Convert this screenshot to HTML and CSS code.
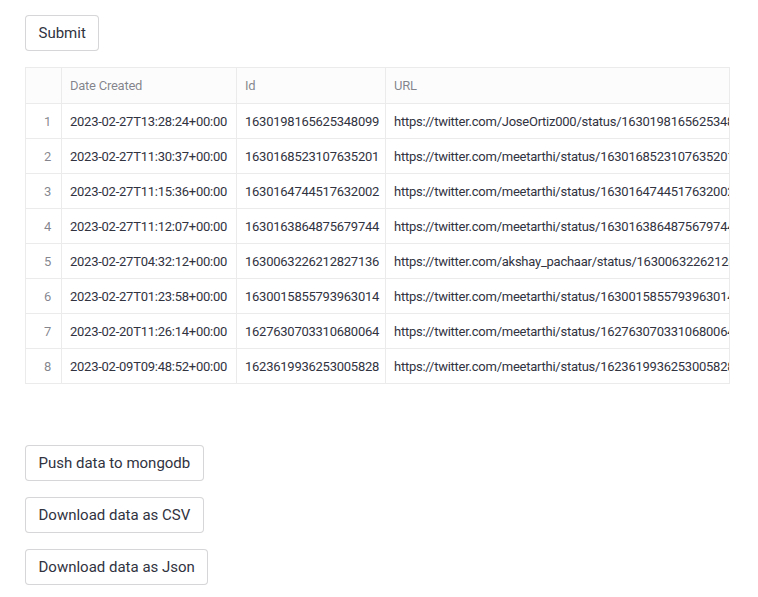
FILE: index.html
```html
<!DOCTYPE html>
<html>
<head>
<meta charset="utf-8">
<link rel="stylesheet" href="styles.css">
</head>
<body>
<main class="page">
  <div class="block"><button class="btn">Submit</button></div>
  <div class="frame">
    <table class="grid">
      <colgroup>
        <col class="c-idx"><col class="c-date"><col class="c-id"><col class="c-url">
      </colgroup>
      <thead>
        <tr><th></th><th>Date Created</th><th>Id</th><th>URL</th></tr>
      </thead>
      <tbody>
        <tr><td class="idx">1</td><td>2023-02-27T13:28:24+00:00</td><td>1630198165625348099</td><td>https://twitter.com/JoseOrtiz000/status/1630198165625348099</td></tr>
        <tr><td class="idx">2</td><td>2023-02-27T11:30:37+00:00</td><td>1630168523107635201</td><td>https://twitter.com/meetarthi/status/1630168523107635201</td></tr>
        <tr><td class="idx">3</td><td>2023-02-27T11:15:36+00:00</td><td>1630164744517632002</td><td>https://twitter.com/meetarthi/status/1630164744517632002</td></tr>
        <tr><td class="idx">4</td><td>2023-02-27T11:12:07+00:00</td><td>1630163864875679744</td><td>https://twitter.com/meetarthi/status/1630163864875679744</td></tr>
        <tr><td class="idx">5</td><td>2023-02-27T04:32:12+00:00</td><td>1630063226212827136</td><td>https://twitter.com/akshay_pachaar/status/1630063226212827136</td></tr>
        <tr><td class="idx">6</td><td>2023-02-27T01:23:58+00:00</td><td>1630015855793963014</td><td>https://twitter.com/meetarthi/status/1630015855793963014</td></tr>
        <tr><td class="idx">7</td><td>2023-02-20T11:26:14+00:00</td><td>1627630703310680064</td><td>https://twitter.com/meetarthi/status/1627630703310680064</td></tr>
        <tr><td class="idx">8</td><td>2023-02-09T09:48:52+00:00</td><td>1623619936253005828</td><td>https://twitter.com/meetarthi/status/1623619936253005828</td></tr>
      </tbody>
    </table>
  </div>
  <div class="actions">
    <button class="btn">Push data to mongodb</button>
    <button class="btn">Download data as CSV</button>
    <button class="btn">Download data as Json</button>
  </div>
</main>
</body>
</html>
```
FILE: styles.css
```css
html, body {
  margin: 0;
  padding: 0;
  background: #ffffff;
}
body {
  font-family: Roboto, "Open Sans", sans-serif;
  color: rgb(49, 51, 63);
}
.page {
  padding: 15px 0 0 25px;
}
.block {
  display: flex;
}
.btn {
  font-family: inherit;
  font-size: 15px;
  color: rgb(49, 51, 63);
  background: #ffffff;
  border: 1px solid rgba(49, 51, 63, 0.2);
  border-radius: 4px;
  height: 36px;
  padding: 0 12.5px;
  line-height: 1;
  cursor: pointer;
}
.frame {
  margin-top: 16px;
  width: 704px;
}
.grid {
  border-collapse: collapse;
  table-layout: fixed;
  width: 704px;
  font-size: 13px;
  letter-spacing: -0.25px;
}
.c-idx { width: 36px; }
.c-date { width: 175px; }
.c-id { width: 149px; }
.c-url { width: 344px; }
.grid th, .grid td {
  border: 1px solid #ebebeb;
  padding: 0 8px;
  white-space: nowrap;
  overflow: hidden;
  text-align: left;
  font-weight: 400;
}
.grid th {
  height: 35px;
  color: rgba(49, 51, 63, 0.6);
  background: #fcfcfc;
}
.grid td {
  height: 34px;
}
.grid td.idx {
  color: rgba(49, 51, 63, 0.6);
  text-align: right;
  padding-right: 10px;
}
.actions {
  margin-top: 61px;
  display: flex;
  flex-direction: column;
  align-items: flex-start;
  gap: 16px;
}
```
